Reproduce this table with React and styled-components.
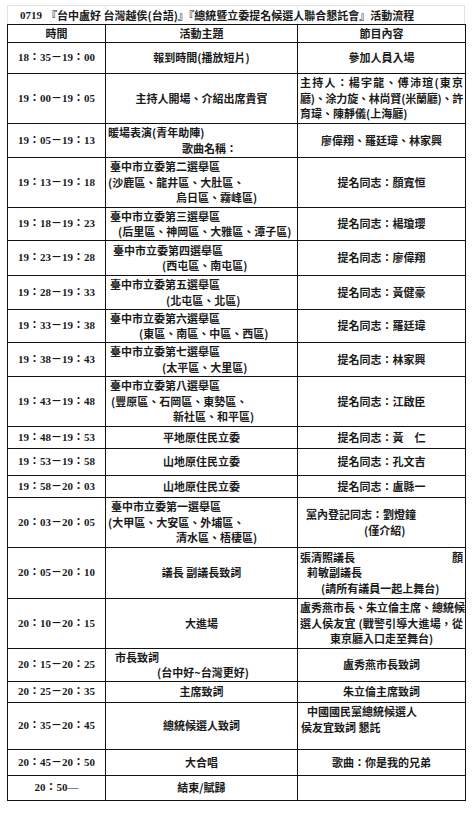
import React from "react";
import styled, { createGlobalStyle } from "styled-components";

const GlobalStyle = createGlobalStyle`
  html, body { margin: 0; padding: 0; background: #fff; }
  body { font-family: "Noto Sans CJK TC", "Noto Sans", sans-serif; color: #1a1a1a; }
`;

const Page = styled.div`
  padding: 5px 0 0 7px;
  width: 458px;
`;

const TitleBar = styled.div`
  box-sizing: border-box;
  height: 19px;
  display: flex;
  align-items: center;
  padding-left: 12px;
  white-space: nowrap;
  font-size: 11px;
  font-weight: 700;
  border: 1px solid #e2e2e2;
  border-bottom: none;
  background: linear-gradient(
    to right,
    transparent 97px,
    #e6e6e6 97px,
    #e6e6e6 98px,
    transparent 98px,
    transparent 289px,
    #e6e6e6 289px,
    #e6e6e6 290px,
    transparent 290px
  );
`;

const Code = styled.span`
  font-family: "Liberation Serif", "Noto Sans CJK TC", serif;
  font-weight: 700;
  margin-right: 4px;
`;

const Table = styled.table`
  width: 458px;
  table-layout: fixed;
  border-collapse: collapse;
  font-size: 11px;
  font-weight: 700;
  line-height: 15.5px;
`;

const Tr = styled.tr`
  height: ${(p) => p.$h}px;
`;

const Cell = styled.td`
  border: 1.5px solid #111;
  padding: 0 2px;
  text-align: center;
  vertical-align: ${(p) => (p.$top ? "top" : "middle")};
  padding-top: ${(p) => (p.$top ? 1 : 0)}px;
  white-space: nowrap;
  overflow: hidden;
`;

const HeadCell = styled(Cell).attrs({ as: "th" })`
  font-weight: 700;
  height: 17px;
`;

const TimeCell = styled(Cell)`
  font-family: "Liberation Serif", "Noto Sans CJK TC", serif;
  font-weight: 700;
  font-size: 11px;
`;

const Line = styled.div`
  padding-left: ${(p) => p.$pad || 0}px;
  text-align: ${(p) => (p.$center ? "center" : p.$justify ? "justify" : "left")};
  text-align-last: ${(p) => (p.$justify ? "justify" : "auto")};
  letter-spacing: ${(p) => p.$ls || 0}px;
  white-space: nowrap;
`;

const Split = styled.div`
  display: flex;
  justify-content: space-between;
`;

const L = (t, pad = 0, extra = {}) => ({ t, pad, ...extra });

const rows = [
  { time: "18：35－19：00", h: 31, topic: "報到時間(播放短片)", content: "參加人員入場" },
  {
    time: "19：00－19：05",
    h: 50,
    topic: "主持人開場、介紹出席貴賓",
    content: [
      L("主持人：楊宇龍、傅沛瑄(東京", 0, { j: true }),
      L("廳)、涂力旋、林尚賢(米蘭廳)、許", 0, { j: true, ls: -0.3 }),
      L("育瑋、陳靜儀(上海廳)"),
    ],
  },
  {
    time: "19：05－19：13",
    h: 34,
    topic: [L("暖場表演(青年助陣)", 0), L("歌曲名稱：", 74)],
    content: "廖偉翔、羅廷瑋、林家興",
  },
  {
    time: "19：13－19：18",
    h: 50,
    topic: [L("臺中市立委第二選舉區", 2), L("(沙鹿區、龍井區、大肚區、", 0), L("烏日區、霧峰區)", 68)],
    content: "提名同志：顏寬恒",
  },
  {
    time: "19：18－19：23",
    h: 33,
    topic: [L("臺中市立委第三選舉區", 2), L("(后里區、神岡區、大雅區、潭子區)", 10)],
    content: "提名同志：楊瓊瓔",
  },
  {
    time: "19：23－19：28",
    h: 35,
    topic: [L("臺中市立委第四選舉區", 5), L("(西屯區、南屯區)", 54)],
    content: "提名同志：廖偉翔",
  },
  {
    time: "19：28－19：33",
    h: 34,
    topic: [L("臺中市立委第五選舉區", 2), L("(北屯區、北區)", 58)],
    content: "提名同志：黃健豪",
  },
  {
    time: "19：33－19：38",
    h: 33,
    topic: [L("臺中市立委第六選舉區", 2), L("(東區、南區、中區、西區)", 31)],
    content: "提名同志：羅廷瑋",
  },
  {
    time: "19：38－19：43",
    h: 34,
    topic: [L("臺中市立委第七選舉區", 2), L("(太平區、大里區)", 54)],
    content: "提名同志：林家興",
  },
  {
    time: "19：43－19：48",
    h: 50,
    topic: [L("臺中市立委第八選舉區", 2), L("(豐原區、石岡區、東勢區、", 3), L("新社區、和平區)", 65)],
    content: "提名同志：江啟臣",
  },
  { time: "19：48－19：53", h: 22, topic: "平地原住民立委", content: "提名同志：黃　仁" },
  { time: "19：53－19：58", h: 27, topic: "山地原住民立委", content: "提名同志：孔文吉" },
  { time: "19：58－20：03", h: 22, topic: "山地原住民立委", content: "提名同志：盧縣一" },
  {
    time: "20：03－20：05",
    h: 50,
    topic: [L("臺中市立委第一選舉區", 3), L("(大甲區、大安區、外埔區、", 0), L("清水區、梧棲區)", 68)],
    content: [L("黨內登記同志：劉燈鐘", 6), L("(僅介紹)", 64)],
  },
  {
    time: "20：05－20：10",
    h: 51,
    topic: "議長 副議長致詞",
    content: [L("", 0, { split: ["張清照議長", "顏"] }), L("莉敏副議長", 7), L("(請所有議員一起上舞台)", 21)],
  },
  {
    time: "20：10－20：15",
    h: 50,
    topic: "大進場",
    content: [
      L("盧秀燕市長、朱立倫主席、總統候", 0),
      L("選人侯友宜 (戰警引導大進場，從", 0, { j: true }),
      L("東京廳入口走至舞台)", 0, { c: true }),
    ],
  },
  {
    time: "20：15－20：25",
    h: 33,
    topic: [L("市長致詞", 7), L("(台中好~台灣更好)", 49)],
    content: "盧秀燕市長致詞",
  },
  { time: "20：25－20：35", h: 21, topic: "主席致詞", content: "朱立倫主席致詞" },
  {
    time: "20：35－20：45",
    h: 47,
    topic: "總統候選人致詞",
    content: [L("中國國民黨總統候選人", 7), L("侯友宜致詞 懇託", 1)],
    top: true,
  },
  { time: "20：45－20：50", h: 26, topic: "大合唱", content: "歌曲：你是我的兄弟" },
  { time: "20：50—", h: 25, topic: "結束/賦歸", content: "" },
];

function Content({ value }) {
  if (typeof value === "string") return value;
  return value.map((l, i) =>
    l.split ? (
      <Split key={i}>
        <span>{l.split[0]}</span>
        <span>{l.split[1]}</span>
      </Split>
    ) : (
      <Line key={i} $pad={l.pad} $justify={l.j} $center={l.c} $ls={l.ls}>
        {l.t}
      </Line>
    )
  );
}

export default function App() {
  return (
    <>
      <GlobalStyle />
      <Page>
        <TitleBar>
          <Code>0719</Code>
          『台中盧好 台灣越俟(台語)』『總統暨立委提名候選人聯合懇託會』活動流程
        </TitleBar>
        <Table>
          <colgroup>
            <col style={{ width: 98 }} />
            <col style={{ width: 192 }} />
            <col style={{ width: 168 }} />
          </colgroup>
          <thead>
            <Tr $h={17}>
              <HeadCell>時間</HeadCell>
              <HeadCell>活動主題</HeadCell>
              <HeadCell>節目內容</HeadCell>
            </Tr>
          </thead>
          <tbody>
            {rows.map((r, i) => (
              <Tr key={i} $h={r.h}>
                <TimeCell>{r.time}</TimeCell>
                <Cell>
                  <Content value={r.topic} />
                </Cell>
                <Cell $top={r.top}>
                  <Content value={r.content} />
                </Cell>
              </Tr>
            ))}
          </tbody>
        </Table>
      </Page>
    </>
  );
}
